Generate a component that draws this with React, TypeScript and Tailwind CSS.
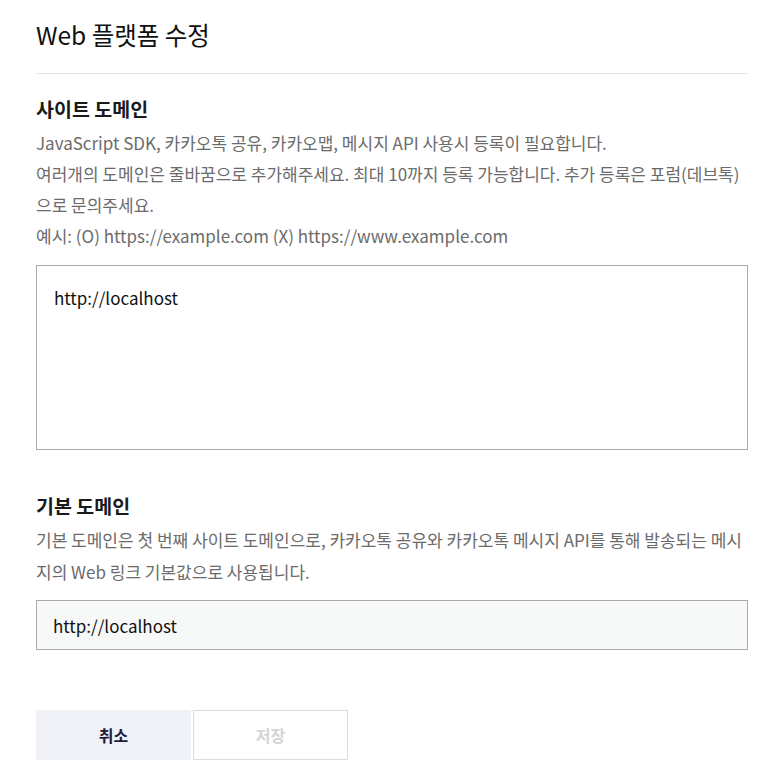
export default function App() {
  return (
    <div
      className="w-[712px] ml-[36px] pb-[20px] bg-white"
      style={{ fontFamily: '"Noto Sans CJK KR", "Noto Sans", sans-serif' }}
    >
      <h1 className="pt-[17px] pb-[20px] text-[24.5px] leading-[36px] text-[#111] border-b border-[#e5e5e5]">
        Web 플랫폼 수정
      </h1>

      <section className="mt-[21px]">
        <h2 className="text-[19.5px] leading-[28px] font-bold text-[#1a1a1a]">사이트 도메인</h2>
        <div className="mt-[4px] text-[17px] leading-[31px] text-[#6b6b6b]">
          <p>JavaScript SDK, 카카오톡 공유, 카카오맵, 메시지 API 사용시 등록이 필요합니다.</p>
          <p>여러개의 도메인은 줄바꿈으로 추가해주세요. 최대 10까지 등록 가능합니다. 추가 등록은 포럼(데브톡)으로 문의주세요.</p>
          <p>예시: (O) https://example.com (X) https://www.example.com</p>
        </div>
        <textarea
          defaultValue="http://localhost"
          className="mt-[14px] block w-full h-[185px] resize-none border border-[#aaa] px-[17px] py-[20px] text-[17px] leading-[24px] text-[#111] outline-none"
          style={{ fontFamily: 'inherit' }}
        />
      </section>

      <section className="mt-[42px]">
        <h2 className="text-[19.5px] leading-[28px] font-bold text-[#1a1a1a]">기본 도메인</h2>
        <p className="mt-[4px] text-[17px] leading-[32px] text-[#6b6b6b]">
          기본 도메인은 첫 번째 사이트 도메인으로, 카카오톡 공유와 카카오톡 메시지 API를 통해 발송되는 메시지의 Web 링크 기본값으로 사용됩니다.
        </p>
        <div className="mt-[12px] h-[50px] flex items-center border border-[#aaa] bg-[#f7f8f8] px-[16px] pt-[2px] text-[17px] text-[#111]">
          http://localhost
        </div>
      </section>

      <div className="mt-[60px] flex gap-[2px]">
        <button className="w-[155px] h-[50px] bg-[#f1f2f8] text-[16px] font-bold text-[#1c1c3c]">
          취소
        </button>
        <button className="w-[155px] h-[50px] border border-[#dcdcdc] bg-white text-[16px] font-bold text-[#d4d4d4]">
          저장
        </button>
      </div>
    </div>
  )
}
